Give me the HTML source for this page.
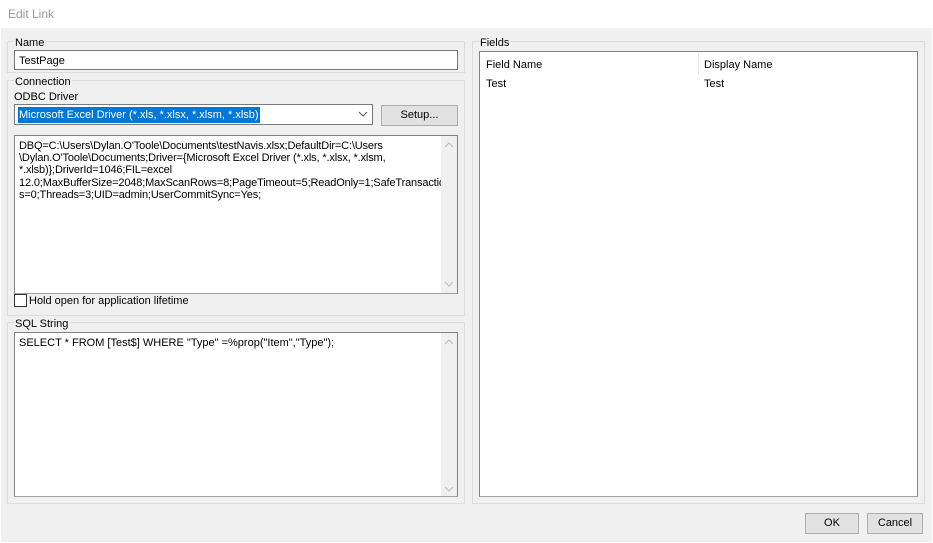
<!DOCTYPE html>
<html><head><style>
*{margin:0;padding:0;box-sizing:border-box}
body{width:933px;height:543px;background:#fff;font-family:"Liberation Sans",sans-serif;font-size:11px;color:#000;position:relative;overflow:hidden}
.a{position:absolute}
.win{left:1px;top:28px;width:931px;height:514px;background:#f0f0f0}
.grp{border:1px solid #dcdcdc;}
.lbl{background:#f0f0f0;padding:0 1px;line-height:12px}
.tb{background:#fff;border:1px solid #7a7a7a}
.ta{background:#fff;border:1px solid #828282;border-bottom-color:#a0a0a0}
.btn{background:#e1e1e1;border:1px solid #adadad;text-align:center;line-height:18px}
.sb{background:#f0f0f0;width:16px}
</style></head><body>
<div class="a" style="left:8px;top:7px;color:#999;font-size:12px">Edit Link</div>
<div class="a win"></div>

<div class="a grp" style="left:7px;top:41px;width:458px;height:32px"></div>
<div class="a lbl" style="left:14px;top:37px">Name</div>
<div class="a tb" style="left:14px;top:50px;width:444px;height:20px;padding:4px 4px">TestPage</div>

<div class="a grp" style="left:7px;top:80px;width:458px;height:236px"></div>
<div class="a lbl" style="left:14px;top:76px">Connection</div>
<div class="a" style="left:14px;top:91px">ODBC Driver</div>
<div class="a tb" style="left:14px;top:104px;width:359px;height:21px"></div>
<div class="a" style="left:18px;top:107px;background:#0078d7;color:#fff;padding:1px 1px;line-height:14px">Microsoft Excel Driver (*.xls, *.xlsx, *.xlsm, *.xlsb)</div>
<svg class="a" style="left:358px;top:110px" width="10" height="8"><path d="M1 2 L5 6 L9 2" stroke="#555" fill="none"/></svg>
<div class="a btn" style="left:381px;top:105px;width:77px;height:21px">Setup...</div>
<div class="a ta" style="left:14px;top:135px;width:444px;height:159px"></div>
<div class="a" style="left:19px;top:140px;width:425px;line-height:12.2px;white-space:nowrap;letter-spacing:-0.15px">DBQ=C:\Users\Dylan.O'Toole\Documents\testNavis.xlsx;DefaultDir=C:\Users<br>\Dylan.O'Toole\Documents;Driver={Microsoft Excel Driver (*.xls, *.xlsx, *.xlsm,<br>*.xlsb)};DriverId=1046;FIL=excel<br>12.0;MaxBufferSize=2048;MaxScanRows=8;PageTimeout=5;ReadOnly=1;SafeTransaction<br>s=0;Threads=3;UID=admin;UserCommitSync=Yes;</div>
<div class="a sb" style="left:441px;top:136px;height:157px"></div>
<svg class="a" style="left:444px;top:142px" width="10" height="6"><path d="M1 5 L5 1 L9 5" stroke="#bbb" fill="none"/></svg>
<svg class="a" style="left:444px;top:281px" width="10" height="6"><path d="M1 1 L5 5 L9 1" stroke="#bbb" fill="none"/></svg>
<div class="a" style="left:14px;top:294px;width:13px;height:13px;border:1px solid #333;background:#fff"></div>
<div class="a" style="left:29px;top:295px">Hold open for application lifetime</div>

<div class="a grp" style="left:7px;top:322px;width:458px;height:182px"></div>
<div class="a lbl" style="left:14px;top:318px">SQL String</div>
<div class="a ta" style="left:14px;top:332px;width:444px;height:165px"></div>
<div class="a" style="left:19px;top:337px">SELECT * FROM [Test$] WHERE "Type" =%prop("Item","Type");</div>
<div class="a sb" style="left:441px;top:333px;height:163px"></div>
<svg class="a" style="left:444px;top:339px" width="10" height="6"><path d="M1 5 L5 1 L9 5" stroke="#bbb" fill="none"/></svg>
<svg class="a" style="left:444px;top:486px" width="10" height="6"><path d="M1 1 L5 5 L9 1" stroke="#bbb" fill="none"/></svg>

<div class="a grp" style="left:472px;top:41px;width:453px;height:463px"></div>
<div class="a lbl" style="left:479px;top:37px">Fields</div>
<div class="a ta" style="left:479px;top:51px;width:439px;height:446px"></div>
<div class="a" style="left:698px;top:53px;width:1px;height:22px;background:#e5e5e5"></div>
<div class="a" style="left:486px;top:59px">Field Name</div>
<div class="a" style="left:704px;top:59px">Display Name</div>
<div class="a" style="left:486px;top:78px">Test</div>
<div class="a" style="left:704px;top:78px">Test</div>

<div class="a btn" style="left:805px;top:513px;width:54px;height:21px">OK</div>
<div class="a btn" style="left:867px;top:513px;width:56px;height:21px">Cancel</div>
</body></html>
